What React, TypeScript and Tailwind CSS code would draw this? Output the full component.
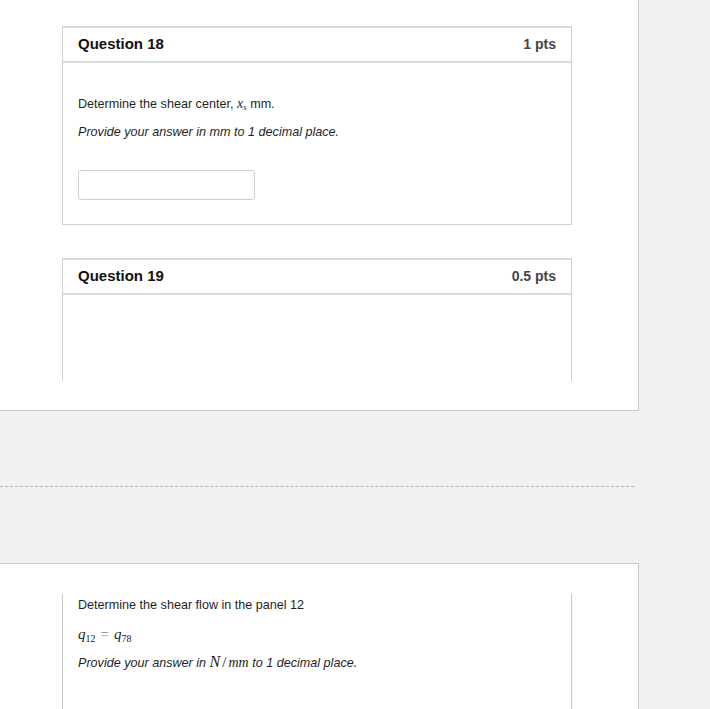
const body = "font-['Liberation_Sans',Arial,sans-serif] text-[12.6px] text-[#1f1f1f]"
const math = "font-['Liberation_Serif','DejaVu_Serif',serif]"

const QuestionHeader = ({ title, pts }: { title: string; pts: string }) => (
  <div className="flex h-[35px] items-center justify-between border-b-2 border-[#dcdcdc] px-[15px] font-['Liberation_Sans',Arial,sans-serif]">
    <span className="text-[15px] font-bold text-[#111]">{title}</span>
    <span className="text-[14px] font-bold text-[#444]">{pts}</span>
  </div>
)

export default function App() {
  return (
    <div className="h-[709px] w-[710px] overflow-hidden bg-[#f1f1f1]">
      {/* upper quiz panel */}
      <div className="h-[411px] w-[639px] border-b border-r border-[#c4c8cc] bg-white pl-[62px] pt-[26px]">
        <div className="h-[355px] w-[510px] overflow-hidden">
          <div className="border border-t-2 border-[#d0d0d0] border-t-[#dadada]">
            <QuestionHeader title="Question 18" pts="1 pts" />
            <div className={`${body} px-[15px] pb-[24px] pt-[32px]`}>
              <p className="leading-[18px]">
                Determine the shear center,{" "}
                <span className={`${math} text-[14px] italic`}>
                  x<sub className="text-[9px]">s</sub>
                </span>{" "}
                mm.
              </p>
              <p className="mt-[10px] leading-[18px] italic">Provide your answer in mm to 1 decimal place.</p>
              <input
                type="text"
                className="mt-[29px] block h-[30px] w-[177px] rounded-[3px] border border-[#cfcfcf] bg-white"
              />
            </div>
          </div>

          <div className="mt-[33px] h-[200px] border border-t-2 border-[#d0d0d0] border-t-[#dadada]">
            <QuestionHeader title="Question 19" pts="0.5 pts" />
          </div>
        </div>
      </div>

      {/* page break */}
      <div className="mt-[75px] w-[634px] border-t border-dashed border-[#b5b5b5]" />

      {/* lower quiz panel */}
      <div className="mt-[76px] h-[200px] w-[639px] border-r border-t border-[#c4c8cc] bg-white pl-[62px] pt-[30px]">
        <div className={`${body} h-[200px] w-[510px] border-x border-[#c8c8c8] px-[15px] pt-[2px]`}>
          <p className="leading-[18px]">Determine the shear flow in the panel 12</p>
          <p className={`${math} mt-[11px] text-[15px] leading-[18px] text-[#222]`}>
            <span className="italic">q</span>
            <sub className="text-[10px]">12</sub>
            <span className="mx-[5px] text-[#888]">=</span>
            <span className="italic">q</span>
            <sub className="text-[10px]">78</sub>
          </p>
          <p className="mt-[10px] leading-[18px] italic">
            Provide your answer in{" "}
            <span className={`${math} text-[16px] italic text-[#222]`}>N</span>
            <span className={`${math} mx-[2px] text-[15px] not-italic text-[#222]`}>/</span>
            <span className={`${math} text-[14px] italic text-[#222]`}>mm</span> to 1 decimal place.
          </p>
        </div>
      </div>
    </div>
  )
}
